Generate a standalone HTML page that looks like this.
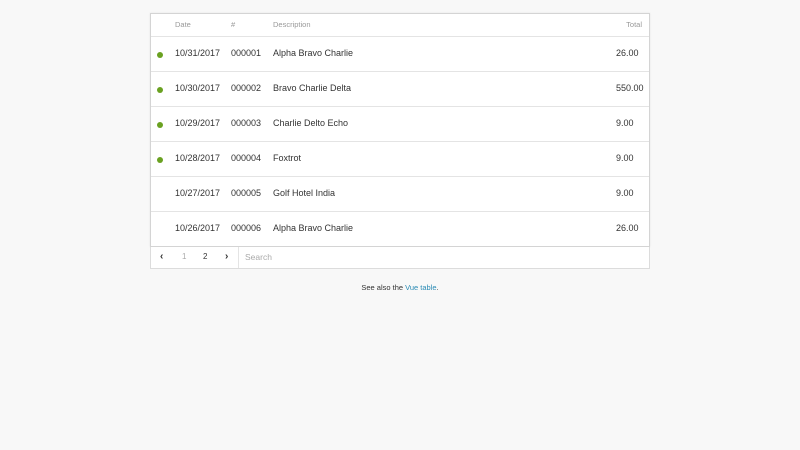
<!DOCTYPE html>
<html><head><style>
body{margin:0;background:#f8f8f8;font-family:"Liberation Sans",sans-serif;width:800px;height:450px;position:relative;overflow:hidden}
.box{position:absolute;left:150px;top:13px;width:498px;height:232px;background:#fff;border:1px solid #d4d4d4;box-shadow:0 0 2px rgba(0,0,0,.08)}
.row{position:absolute;left:0;width:498px;border-top:1px solid #e4e4e4;font-size:9px;color:#333}
.row span{position:absolute;top:0}
.h{color:#999;font-size:7.5px}
.dot{position:absolute;left:6px;width:6px;height:6px;border-radius:50%;background:#6aa121}
.foot{position:absolute;left:150px;top:247px;width:498px;height:21px;background:#fff;border:1px solid #dcdcdc;border-top:none}
.foot span{position:absolute;top:5px;font-size:8px;color:#333}
.note{position:absolute;top:283px;left:0;width:800px;text-align:center;font-size:7.5px;color:#333}
.note a{color:#2a8bb5;text-decoration:none}
</style></head><body>
<div class="box">
<div class="row h" style="top:0;border-top:none;height:22px"><span style="left:24px;top:6px">Date</span><span style="left:80px;top:6px">#</span><span style="left:122px;top:6px">Description</span><span style="right:7px;top:6px">Total</span></div>
<div class="row" style="top:22px;height:34px"><i class="dot" style="top:15px"></i><span style="left:24px;top:11px">10/31/2017</span><span style="left:80px;top:11px">000001</span><span style="left:122px;top:11px">Alpha Bravo Charlie</span><span style="left:465px;top:11px">26.00</span></div>
<div class="row" style="top:57px;height:34px"><i class="dot" style="top:15px"></i><span style="left:24px;top:11px">10/30/2017</span><span style="left:80px;top:11px">000002</span><span style="left:122px;top:11px">Bravo Charlie Delta</span><span style="left:465px;top:11px">550.00</span></div>
<div class="row" style="top:92px;height:34px"><i class="dot" style="top:15px"></i><span style="left:24px;top:11px">10/29/2017</span><span style="left:80px;top:11px">000003</span><span style="left:122px;top:11px">Charlie Delto Echo</span><span style="left:465px;top:11px">9.00</span></div>
<div class="row" style="top:127px;height:34px"><i class="dot" style="top:15px"></i><span style="left:24px;top:11px">10/28/2017</span><span style="left:80px;top:11px">000004</span><span style="left:122px;top:11px">Foxtrot</span><span style="left:465px;top:11px">9.00</span></div>
<div class="row" style="top:162px;height:34px"><span style="left:24px;top:11px">10/27/2017</span><span style="left:80px;top:11px">000005</span><span style="left:122px;top:11px">Golf Hotel India</span><span style="left:465px;top:11px">9.00</span></div>
<div class="row" style="top:197px;height:34px"><span style="left:24px;top:11px">10/26/2017</span><span style="left:80px;top:11px">000006</span><span style="left:122px;top:11px">Alpha Bravo Charlie</span><span style="left:465px;top:11px">26.00</span></div>
</div>
<div class="foot">
<span style="left:9px;top:4px;font-size:10px;font-weight:bold">‹</span>
<span style="left:31px;color:#aaa">1</span>
<span style="left:52px">2</span>
<span style="left:74px;top:4px;font-size:10px;font-weight:bold">›</span>
<div style="position:absolute;left:87px;top:0;width:1px;height:21px;background:#e4e4e4"></div>
<span style="left:94px;top:5px;font-size:8.5px;color:#aaa">Search</span>
</div>
<div class="note">See also the <a>Vue table</a>.</div>
</body></html>
